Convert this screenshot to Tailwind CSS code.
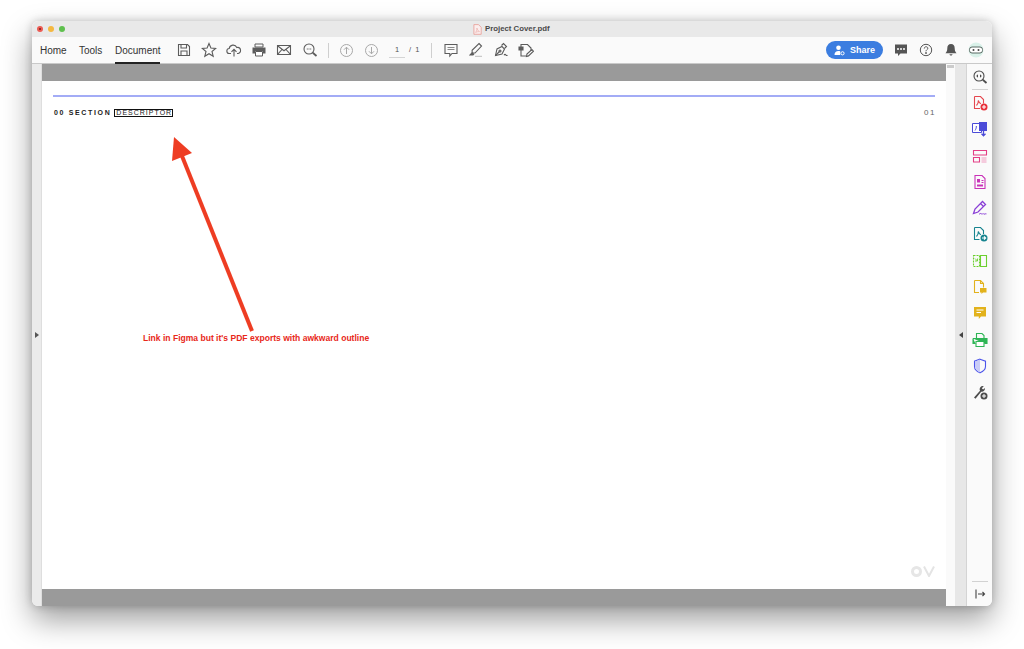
<!DOCTYPE html>
<html lang="en">
<head>
  <meta charset="UTF-8">
  <title>Project Cover.pdf</title>
  <script src="https://cdn.jsdelivr.net/npm/@tailwindcss/browser@4"></script>
</head>
<body class="bg-white h-[649px] overflow-hidden font-['Liberation_Sans',sans-serif]">
  <div class="pt-[21px] pl-[32px]">
    <!-- Window -->
    <div class="relative w-[960px] h-[585px] flex flex-col rounded-[6px] overflow-hidden bg-white shadow-[0_14px_30px_rgba(0,0,0,0.38),0_0_8px_rgba(0,0,0,0.2)]">

      <!-- Title bar -->
      <div class="relative h-[16px] shrink-0 bg-[#e9e9e9] flex items-center pl-[5px] gap-[5px]">
        <span class="w-[6px] h-[6px] rounded-full bg-[#ec5b53] flex items-center justify-center"><span class="w-[2px] h-[2px] rounded-full bg-[#7a1a14]"></span></span>
        <span class="w-[6px] h-[6px] rounded-full bg-[#f4b841]"></span>
        <span class="w-[6px] h-[6px] rounded-full bg-[#5fc04e]"></span>
        <div class="absolute left-[441px] top-0 h-[16px] flex items-center gap-[3px]">
          <svg width="9" height="11" viewBox="0 0 9 11" fill="#fbeeee" stroke="#e79a94" stroke-width="0.8"><path d="M.9.6h4.600l2.700 2.700v7H.9z"/><path d="M2.600 8.400c1-1.400 1.400-3 1.300-4.400.5 1.600 1.200 3 2.600 3.600-1.400 0-2.800.2-3.900.8z" stroke-width="0.5"/></svg>
          <span class="text-[7.800px] leading-none font-bold text-[#4a4a4a]">Project Cover.pdf</span>
        </div>
      </div>

      <!-- Toolbar -->
      <div class="h-[27px] shrink-0 bg-[#fafafa] border-b border-[#c9c9c9] flex items-stretch pl-[8px] pr-[3px] text-[#3b3b3b]">
        <div class="flex items-stretch gap-[13px] text-[10px] text-[#333]">
          <span class="flex items-center w-[26px]">Home</span>
          <span class="flex items-center w-[23px]">Tools</span>
          <span class="flex items-center border-b-2 border-[#222] pt-[2px] -mb-px w-[45px] whitespace-nowrap">Document</span>
        </div>
        <div class="ml-[11px] flex items-center">
          <!-- save -->
          <span class="w-[25px] flex justify-center"><svg width="16" height="16" viewBox="0 0 16 16" fill="none" stroke="#5c5c5c" stroke-width="1.100"><path d="M2.500 2.500h9l2 2v9h-11z"/><path d="M5 2.500v3.500h5.500v-3.500M5 13.500v-4.500h6v4.500"/></svg></span>
          <!-- star -->
          <span class="w-[25px] flex justify-center"><svg width="16" height="16" viewBox="0 0 16 16" fill="none" stroke="#5c5c5c" stroke-width="1.100"><path d="M8 1.500l1.900 4.500 4.800.4-3.700 3.100 1.200 4.800L8 11.700l-4.200 2.600L5 9.500 1.300 6.400l4.800-.4z"/></svg></span>
          <!-- cloud upload -->
          <span class="w-[25px] flex justify-center"><svg width="16" height="16" viewBox="0 0 16 16" fill="none" stroke="#5c5c5c" stroke-width="1.100"><path d="M5 11.500H3.500a2.500 2.500 0 0 1-.3-5 4 4 0 0 1 7.600-1 3 3 0 0 1 1.400 6H11"/><path d="M8 14.500V7.500M5.500 9.800 8 7.300l2.500 2.500"/></svg></span>
          <!-- print -->
          <span class="w-[25px] flex justify-center"><svg width="16" height="16" viewBox="0 0 16 16" fill="#5c5c5c"><path d="M4 2h8v3H4z" fill="none" stroke="#5c5c5c"/><path d="M1.500 5.500h13v6H12V9H4v2.500H1.500z"/><path d="M4.500 9.500h7v4.500h-7z" fill="#fff" stroke="#5c5c5c"/></svg></span>
          <!-- mail -->
          <span class="w-[26px] flex justify-center"><svg width="16" height="16" viewBox="0 0 16 16" fill="none" stroke="#5c5c5c" stroke-width="1.100"><path d="M1.500 3.500h13v9h-13z"/><path d="M1.500 3.800 8 8.800l6.500-5M1.800 12.200 6 7.500M14.200 12.200 10 7.500"/></svg></span>
          <!-- zoom -->
          <span class="w-[25px] flex justify-center"><svg width="16" height="16" viewBox="0 0 16 16" fill="none" stroke="#5c5c5c" stroke-width="1.100"><circle cx="7" cy="7" r="5"/><path d="M10.800 10.800l3.700 3.200" stroke-width="1.800"/><path d="M4.800 7h1M6.500 7h1M8.200 7h1"/></svg></span>
          <span class="w-px h-[15px] bg-[#cfcfcf] ml-[6px] mr-[5px]"></span>
          <!-- prev / next page -->
          <span class="w-[25px] flex justify-center"><svg width="15" height="15" viewBox="0 0 15 15" fill="none" stroke="#a8a8a8" stroke-width="1"><circle cx="7.500" cy="7.500" r="6"/><path d="M7.500 11V4.300M5 6.700l2.500-2.500L10 6.700"/></svg></span>
          <span class="w-[25px] flex justify-center"><svg width="15" height="15" viewBox="0 0 15 15" fill="none" stroke="#a8a8a8" stroke-width="1"><circle cx="7.500" cy="7.500" r="6"/><path d="M7.500 4v6.700M5 8.300l2.500 2.500L10 8.300"/></svg></span>
          <span class="w-[16px] ml-[5px] pb-[3px] pt-[2px] border-b border-[#d5d5d5] text-center text-[7.500px] leading-[9px] text-[#555]">1</span>
          <span class="ml-[4px] w-[17px] text-[7.500px] text-[#555] tracking-[1px]">/ 1</span>
          <span class="w-px h-[15px] bg-[#cfcfcf] ml-[5px] mr-[6px]"></span>
          <!-- comment -->
          <span class="w-[25px] flex justify-center"><svg width="16" height="16" viewBox="0 0 16 16" fill="none" stroke="#5c5c5c" stroke-width="1.100"><path d="M2 2.500h12v9H9l-2.200 2.500v-2.500H2z"/><path d="M4.500 5.500h7M4.500 7.500h7" stroke="#8a8a8a"/></svg></span>
          <!-- highlight -->
          <span class="w-[25px] flex justify-center"><svg width="16" height="16" viewBox="0 0 16 16" fill="none" stroke="#5c5c5c" stroke-width="1.100"><path d="M11 1.500l2.500 2.500-6.500 7-2.800-.1-.1-2.600z"/><path d="M4.200 10.500 2 13h3l1-1.200" fill="#5c5c5c"/><path d="M7 14.300h7" stroke="#c9c9c9" stroke-width="1.300"/></svg></span>
          <!-- sign pen -->
          <span class="w-[25px] flex justify-center"><svg width="16" height="16" viewBox="0 0 16 16" fill="none" stroke="#5c5c5c" stroke-width="1.100"><path d="M2.500 13.500 4 7l5-2.500 2.500 2.500L9 12z"/><path d="M2.500 13.500 6.500 9.500"/><circle cx="7" cy="9" r="1"/><path d="M8.500 3.500 10.500 1.500l3 3-2 2"/><path d="M11 13.200c1-1.500 1.500-.5 2 0s1 .4 1.500 0"/></svg></span>
          <!-- stamp / more tools -->
          <span class="w-[25px] flex justify-center"><svg width="16" height="16" viewBox="0 0 16 16" fill="none" stroke="#5c5c5c" stroke-width="1.100"><path d="M3 5V2.500h6.500l3.500 3.500v3M3 8v6h5"/><path d="M1 5h4v3H1z" fill="#5c5c5c"/><path d="M8.500 14.500l.4-2.400 5-4.600 1.600 1.700-5 4.700z"/></svg></span>
        </div>
        <div class="ml-auto flex items-center">
          <span class="w-[57px] h-[18px] rounded-full bg-[#3b7de0] flex items-center justify-center gap-[5px] text-white text-[9px] font-bold">
            <svg width="11" height="11" viewBox="0 0 11 11" fill="#fff"><circle cx="4.500" cy="2.800" r="2.300"/><path d="M.5 10c0-2.800 1.500-4 4-4 .7 0 1.200.1 1.700.3v3.700z"/><circle cx="8.500" cy="8.300" r="1.600" fill="none" stroke="#fff"/></svg>
            <span class="pt-px">Share</span>
          </span>
          <span class="w-[25px] ml-[5px] flex justify-center"><svg width="14" height="14" viewBox="0 0 14 14"><path d="M1 1.500h12v9H6.500L4 13v-2.500H1z" fill="#555"/><circle cx="4" cy="6" r="1" fill="#fff"/><circle cx="7" cy="6" r="1" fill="#fff"/><circle cx="10" cy="6" r="1" fill="#fff"/></svg></span>
          <span class="w-[25px] flex justify-center"><svg width="14" height="14" viewBox="0 0 14 14" fill="none" stroke="#555" stroke-width="1"><circle cx="7" cy="7" r="5.700"/><path d="M5.300 5.500c0-2.300 3.500-2.300 3.500-.2 0 1.400-1.800 1.400-1.800 3"/><circle cx="7" cy="10" r=".5" fill="#555"/></svg></span>
          <span class="w-[25px] flex justify-center"><svg width="14" height="14" viewBox="0 0 14 14" fill="#555"><path d="M7 1c2.600 0 3.700 1.900 3.700 4.200 0 2.500.8 3.900 1.800 5H1.500c1-1.100 1.800-2.500 1.800-5C3.300 2.900 4.400 1 7 1z"/><path d="M5.500 11.200h3c0 1.800-3 1.800-3 0z"/></svg></span>
          <span class="w-[26px] flex justify-center"><svg width="16" height="16" viewBox="0 0 16 16"><circle cx="8" cy="8" r="7.500" fill="#d9f1e9"/><rect x="1.500" y="5" width="13" height="6" rx="2.500" fill="#fff" stroke="#5a6a64"/><circle cx="5.500" cy="8" r="1" fill="#444"/><circle cx="10.500" cy="8" r="1" fill="#444"/></svg></span>
        </div>
      </div>

      <!-- Body -->
      <div class="flex-1 flex min-h-0">
        <!-- Left pane handle -->
        <div class="w-[10px] bg-[#ebebeb] flex items-center justify-center border-r border-[#dedede]">
          <span class="w-0 h-0 border-y-[3px] border-y-transparent border-l-[4px] border-l-[#555]"></span>
        </div>

        <!-- Document -->
        <div class="relative w-[904px] flex flex-col">
          <div class="h-[17px] bg-[#9a9a9a]"></div>
          <div class="flex-1 bg-white pt-[14px] px-[11px]">
            <div class="h-[2px] bg-[#a3acf6]"></div>
            <div class="mt-[11px] flex items-center justify-between text-[7px] leading-[9px] text-[#222]">
              <div class="flex items-center font-bold">
                <span class="tracking-[1.650px] pl-px">00 SECTION</span>
                <span class="ml-[3px] pl-px border border-[#111] font-normal tracking-[1px] h-[8px] leading-[7px] flex items-center">DESCRIPTOR</span>
              </div>
              <span class="text-[#666] text-[8px] tracking-[1.500px] -mr-px">01</span>
            </div>
          </div>
          <div class="h-[17px] bg-[#9a9a9a]"></div>

          <!-- Annotation drawn on top of the page -->
          <svg class="absolute left-[120px] top-[60px]" width="100" height="215" viewBox="120 60 100 215" fill="none">
            <path d="M210 267 140 92" stroke="#ee3d23" stroke-width="4"/>
            <path d="M132 73 130 97 150 89z" fill="#ee3d23"/>
          </svg>
          <span class="absolute left-[101px] top-[269px] text-[8.550px] leading-[11px] font-bold text-[#e8281a] whitespace-nowrap">Link in Figma but it's PDF exports with awkward outline</span>

          <!-- OV watermark -->
          <div class="absolute left-[869px] top-[502px] flex items-center gap-px">
            <span class="w-[11px] h-[11px] rounded-full border-[3px] border-[#e6e6e6]"></span>
            <svg width="12" height="11" viewBox="0 0 12 11" fill="none" stroke="#e4e4e4" stroke-width="2"><path d="M1 .5 6 10 11 .5"/></svg>
          </div>
        </div>

        <!-- Scrollbar track and pane handle -->
        <div class="relative w-[9px] bg-[#fafafa]">
          <div class="mt-px mx-px h-[3px] bg-[#cccccc]"></div>
        </div>
        <div class="w-[11px] bg-[#e7e7e7] flex items-center justify-center">
          <span class="w-0 h-0 border-y-[3px] border-y-transparent border-r-[4px] border-r-[#444]"></span>
        </div>

        <!-- Right tool rail -->
        <div class="flex-1 bg-[#fafafa] border-l border-[#d4d4d4] flex flex-col items-center pt-[5px]">
          <svg width="16" height="16" viewBox="0 0 16 16" fill="none" stroke="#4d4d4d" stroke-width="1.100"><circle cx="7" cy="7" r="5"/><path d="M10.800 10.800l3.700 3.200" stroke-width="1.800"/><path d="M6 5.200v3.600L4.200 7zM8 5.200v3.600L9.800 7z" fill="#4d4d4d" stroke="none"/></svg>
          <span class="w-[16px] h-px bg-[#d2d2d2] mt-[4px] mb-[5px]"></span>
          <div class="flex flex-col items-center gap-[10.300px]">
            <!-- create pdf -->
            <svg width="16" height="16" viewBox="0 0 16 16" fill="none" stroke="#e5474e" stroke-width="1.100"><path d="M2.500 1.500h6l3 3v4M2.500 1.500v12H8"/><path d="M4.500 10.500c1.500-1.600 2-3.500 1.800-5 .5 1.500 1.400 2.800 2.700 3.200"/><circle cx="12" cy="12" r="3.500" fill="#e8303a" stroke="none"/><path d="M10 12h4M12 10v4" stroke="#fff"/></svg>
            <!-- combine -->
            <svg width="16" height="16" viewBox="0 0 16 16" fill="#4b4bd8"><path d="M.5 2.500h9v9h-9z" fill="#fff" stroke="#4b4bd8"/><path d="M7 1h8v9H7z"/><path d="M3 9.500c1-1.500 1.500-3 1.300-4.500" fill="none" stroke="#4b4bd8"/><path d="M11.500 10v4.500M9.500 12.800l2 2 2-2" fill="none" stroke="#4b4bd8" stroke-width="1.300"/></svg>
            <!-- organize -->
            <svg width="16" height="16" viewBox="0 0 16 16" fill="none" stroke="#e33f86" stroke-width="1.100"><path d="M1.500 2.500h13v4.500h-13z"/><path d="M1.500 9.500h6v4.500h-6z"/><path d="M9.500 10h5M9.500 12h5M9.500 14h5" stroke="#ef9cc0"/></svg>
            <!-- edit -->
            <svg width="16" height="16" viewBox="0 0 16 16" fill="none" stroke="#c932b8" stroke-width="1.100"><path d="M3 1.500h7l3 3v10H3z"/><path d="M5 5h3v3.500H5zM5 10.500h6v2H5z" fill="#c932b8" stroke="none"/><path d="M9.500 6.500h2M9.500 8.500h2"/></svg>
            <!-- sign -->
            <svg width="16" height="16" viewBox="0 0 16 16" fill="none" stroke="#8a3fd6" stroke-width="1.300"><path d="M1.500 13.500 3 9l7.500-7.500 3 3L6 12z"/><path d="M8.500 3.500l3 3"/><path d="M7 14.300c1.500-1.300 2.500-1 3 0 .7-1 1.500-1 2 0 .6-.6 1.200-.6 2.500-.4" stroke-width="0.900"/></svg>
            <!-- export -->
            <svg width="16" height="16" viewBox="0 0 16 16" fill="none" stroke="#17848f" stroke-width="1.100"><path d="M2.500 1.500h6l3 3v3.500M2.500 1.500v12h5"/><path d="M4.500 10.500c1.500-1.600 2-3.500 1.800-5 .5 1.500 1.400 2.800 2.700 3.200"/><circle cx="12" cy="12" r="3.500" fill="#17848f" stroke="none"/><path d="M10 12h3.500M12 10.300l1.700 1.700-1.700 1.700" stroke="#fff"/></svg>
            <!-- compress -->
            <svg width="16" height="16" viewBox="0 0 16 16" fill="none" stroke="#6ccf2f" stroke-width="1.100"><path d="M1.500 2.500h6v11h-6z" stroke-dasharray="2 1"/><path d="M8.500 2.500h6v11h-6z"/><path d="M3 5.500l2.500 2.500M3 8h2.500v-2.500" stroke-width="0.900"/></svg>
            <!-- request review -->
            <svg width="16" height="16" viewBox="0 0 16 16" fill="none" stroke="#e2b21c" stroke-width="1.100"><path d="M2.500 1.500h6l3 3v4M2.500 1.500v12H7"/><path d="M8.500 1.500v3h3"/><path d="M8 9h6.500v4.500h-3.500l-1.500 1.500v-1.500H8z" fill="#e2b21c" stroke="none"/></svg>
            <!-- comment -->
            <svg width="16" height="16" viewBox="0 0 16 16" fill="#e2b21c"><path d="M2 2h12v9.500H9l-2.200 2.500v-2.500H2z"/><path d="M4.500 5h7M4.500 7.500h4.500" stroke="#fff" fill="none"/></svg>
            <!-- print production -->
            <svg width="16" height="16" viewBox="0 0 16 16" fill="none" stroke="#2eb555" stroke-width="1.100"><path d="M4.500 6V1.500h5.500l2 2V6"/><path d="M1 6.500h14v5h-2.500M1 6.500v5h2.500" fill="#2eb555"/><path d="M4 9.500h8v5H4z" fill="#fff"/></svg>
            <!-- protect -->
            <svg width="16" height="16" viewBox="0 0 16 16" fill="none" stroke="#4d55ea" stroke-width="1.100"><path d="M8 1.200l5.500 2v5.300c0 3-2.500 5-5.500 6.300-3-1.300-5.500-3.300-5.500-6.300V3.200z"/><path d="M8 1.600v12.800c-2.600-1.200-5-3-5-5.900V3.600z" fill="#c9ccf7" stroke="none"/></svg>
            <!-- more tools -->
            <svg width="16" height="16" viewBox="0 0 16 16" fill="#4d4d4d"><path d="M2 13.500 8 6.800A3.200 3.200 0 0 1 11.800 2.200L9.800 4.300l1.300 1.300 1.800-1.700a3.200 3.200 0 0 1-3.700 3.800L3.500 14.800z"/><circle cx="12" cy="12" r="3.500"/><path d="M10 12h4M12 10v4" stroke="#fff"/></svg>
          </div>
          <span class="mt-auto w-[16px] h-px bg-[#d2d2d2]"></span>
          <svg class="mt-[6px] mb-[6px]" width="12" height="12" viewBox="0 0 12 12" fill="none" stroke="#444" stroke-width="1.100"><path d="M2 1.500v9M4 6h6.500M8.500 4l2 2-2 2"/></svg>
        </div>
      </div>
    </div>
  </div>
</body>
</html>
